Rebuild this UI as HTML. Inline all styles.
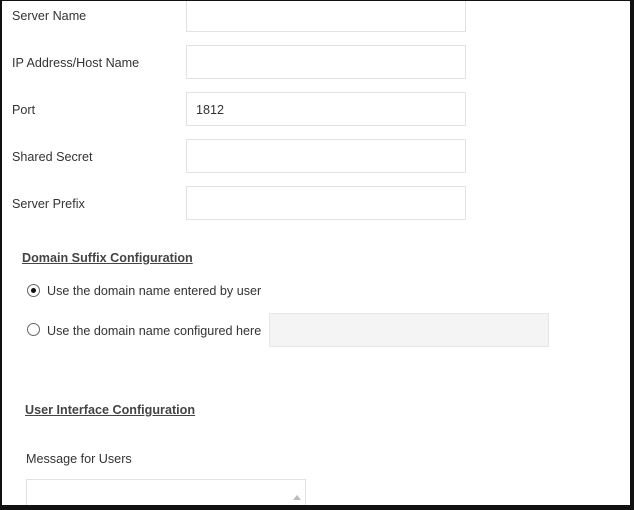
<html style="width:634px;height:510px;overflow:hidden"><head><style>
body{margin:0;width:634px;height:510px;overflow:hidden;position:relative;background:#fff;font-family:"Liberation Sans",sans-serif;font-size:12.6px;color:#333;}
.frame{position:absolute;left:0;top:0;width:628px;height:504px;border:solid #111;border-width:1px 4px 5px 2px;z-index:5;pointer-events:none}
.a{position:absolute}
.in{position:absolute;border:1px solid #e2e2e2;background:#fff;box-sizing:border-box;width:280px;height:34px;left:186px;}
.h{position:absolute;font-weight:bold;text-decoration:underline;color:#444;font-size:12.6px}
.r{position:absolute;width:11px;height:11px;border:1px solid #666;border-radius:50%;}
</style></head><body>
<div class="frame"></div>
<div class="a" style="left:12px;top:9px">Server Name</div>
<div class="in" style="top:-2px"></div>
<div class="a" style="left:12px;top:56px">IP Address/Host Name</div>
<div class="in" style="top:45px"></div>
<div class="a" style="left:12px;top:103px">Port</div>
<div class="in" style="top:92px"><span class="a" style="left:9px;top:10px">1812</span></div>
<div class="a" style="left:12px;top:150px">Shared Secret</div>
<div class="in" style="top:139px"></div>
<div class="a" style="left:12px;top:197px">Server Prefix</div>
<div class="in" style="top:186px"></div>
<div class="h" style="left:22px;top:251px">Domain Suffix Configuration</div>
<div class="r" style="left:27px;top:284px"><div class="a" style="left:3px;top:3px;width:5px;height:5px;border-radius:50%;background:#111"></div></div>
<div class="a" style="left:47px;top:284px">Use the domain name entered by user</div>
<div class="r" style="left:27px;top:323px"></div>
<div class="a" style="left:47px;top:324px">Use the domain name configured here</div>
<div class="in" style="left:269px;top:313px;background:#f4f4f4;border-color:#e6e6e6"></div>
<div class="h" style="left:25px;top:403px">User Interface Configuration</div>
<div class="a" style="left:26px;top:452px">Message for Users</div>
<div class="in" style="left:26px;top:479px;height:27px;border-bottom:0"><div class="a" style="left:266px;top:15px;width:0;height:0;border:4px solid transparent;border-bottom:5px solid #bbb;border-top:0"></div></div>
</body></html>
